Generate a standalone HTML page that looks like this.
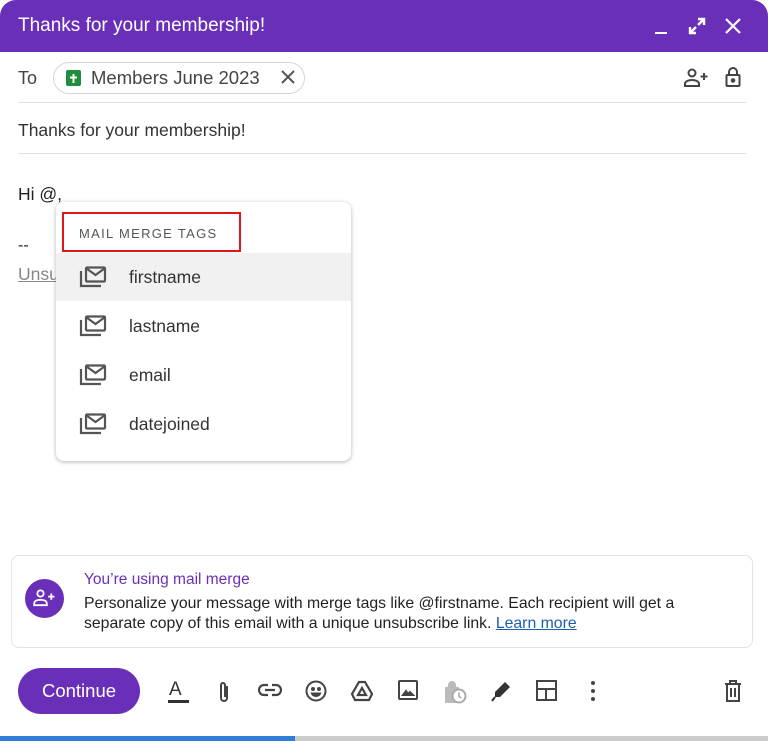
<!DOCTYPE html>
<html><head><meta charset="utf-8"><style>
*{margin:0;padding:0;box-sizing:border-box}
body{width:768px;height:741px;background:#fff;font-family:"Liberation Sans",sans-serif;position:relative;overflow:hidden;color:#222}
.abs{position:absolute}
.hdr{left:0;top:0;width:768px;height:52px;background:#6a2fb9;border-radius:16px 16px 0 0}
.t{white-space:nowrap}
.line{height:1px;background:#e3e3dc;left:18px;width:728px}
.pop{left:56px;top:202px;width:295px;height:259px;background:#fff;border-radius:8px;box-shadow:0 1px 4px rgba(0,0,0,.3)}
.item{left:56px;width:295px;height:48px}
.item svg{position:absolute;left:23px;top:13px}
.item span{position:absolute;left:73px;top:14px;font-size:17.5px;color:#333}
.tb{top:680px}
</style></head><body>
<div class="abs hdr"></div>
<div class="abs t" style="left:18px;top:15px;font-size:19px;color:#fff">Thanks for your membership!</div>
<div class="abs" style="left:655px;top:32px;width:12px;height:2px;background:#fff"></div>
<svg class="abs" style="left:688px;top:17px" width="18" height="18" viewBox="0 0 18 18" fill="none" stroke="#fff" stroke-width="2.4"><path d="M10 2h6v6M16 2l-6 6M8 16H2v-6M2 16l6-6"/></svg>
<svg class="abs" style="left:725px;top:18px" width="16" height="16" viewBox="0 0 16 16" stroke="#fff" stroke-width="2.2"><path d="M1 1l14 14M15 1L1 15"/></svg>

<div class="abs t" style="left:18px;top:68px;font-size:18px;color:#444">To</div>
<div class="abs" style="left:53px;top:62px;width:252px;height:32px;border:1px solid #d6d6d0;border-radius:16px"></div>
<svg class="abs" style="left:66px;top:70px" width="15" height="16" viewBox="0 0 15 16"><rect width="15" height="16" rx="2" fill="#1e8e3e"/><path d="M7.5 4v9M4 7.5h7" stroke="#fff" stroke-width="2"/></svg>
<div class="abs t" style="left:91px;top:67px;font-size:18.5px;color:#444">Members June 2023</div>
<svg class="abs" style="left:281px;top:70px" width="14" height="14" stroke="#555" stroke-width="2"><path d="M1 1l12 12M13 1L1 13"/></svg>
<svg class="abs" style="left:684px;top:68px" width="26" height="20" viewBox="0 0 26 20" fill="none" stroke="#444" stroke-width="2"><circle cx="8" cy="5" r="3.5"/><path d="M1 18v-2c0-3 4-4 7-4s7 1 7 4v2z"/><path d="M20 5v7M16.5 8.5h7"/></svg>
<svg class="abs" style="left:725px;top:66px" width="16" height="22" viewBox="0 0 16 22" fill="none" stroke="#444" stroke-width="2"><path d="M4 9V6a4 4 0 018 0v3"/><rect x="1.5" y="9" width="13" height="11" rx="1"/><circle cx="8" cy="14.5" r="1.3" fill="#444"/></svg>
<div class="abs line" style="top:102px"></div>
<div class="abs t" style="left:18px;top:120px;font-size:17.5px;color:#333">Thanks for your membership!</div>
<div class="abs line" style="top:153px"></div>
<div class="abs t" style="left:18px;top:184px;font-size:17.5px;color:#222">Hi @,</div>
<div class="abs t" style="left:18px;top:237px;font-size:16px;color:#222">--</div>
<div class="abs t" style="left:18px;top:264px;font-size:17.5px;color:#888;text-decoration:underline">Unsu</div>

<div class="abs pop"></div>
<div class="abs" style="left:62px;top:212px;width:179px;height:40px;border:2px solid #e0161b"></div>
<div class="abs t" style="left:79px;top:226px;font-size:13px;letter-spacing:1.3px;color:#555">MAIL MERGE TAGS</div>
<div class="abs item" style="top:253px;background:#f1f1f1"><svg width="28" height="22" viewBox="0 0 28 22" fill="none" stroke="#555" stroke-width="2.2"><path d="M2 5v15h20"/><rect x="7" y="1.5" width="19" height="14" rx="1"/><path d="M7.5 2.5l9 6.5 9-6.5"/></svg><span>firstname</span></div>
<div class="abs item" style="top:302px"><svg width="28" height="22" viewBox="0 0 28 22" fill="none" stroke="#555" stroke-width="2.2"><path d="M2 5v15h20"/><rect x="7" y="1.5" width="19" height="14" rx="1"/><path d="M7.5 2.5l9 6.5 9-6.5"/></svg><span>lastname</span></div>
<div class="abs item" style="top:351px"><svg width="28" height="22" viewBox="0 0 28 22" fill="none" stroke="#555" stroke-width="2.2"><path d="M2 5v15h20"/><rect x="7" y="1.5" width="19" height="14" rx="1"/><path d="M7.5 2.5l9 6.5 9-6.5"/></svg><span>email</span></div>
<div class="abs item" style="top:400px"><svg width="28" height="22" viewBox="0 0 28 22" fill="none" stroke="#555" stroke-width="2.2"><path d="M2 5v15h20"/><rect x="7" y="1.5" width="19" height="14" rx="1"/><path d="M7.5 2.5l9 6.5 9-6.5"/></svg><span>datejoined</span></div>

<div class="abs" style="left:11px;top:555px;width:742px;height:93px;border:1px solid #e3e3e3;border-radius:8px"></div>
<div class="abs" style="left:25px;top:579px;width:39px;height:39px;border-radius:50%;background:#6a2fb9"></div>
<svg class="abs" style="left:33px;top:589px" width="24" height="18" viewBox="0 0 26 20" fill="none" stroke="#fff" stroke-width="2"><circle cx="8" cy="5" r="3.5"/><path d="M1 18v-2c0-3 4-4 7-4s7 1 7 4v2z"/><path d="M20 5v7M16.5 8.5h7"/></svg>
<div class="abs t" style="left:84px;top:571px;font-size:15.5px;color:#6a2fb9">You’re using mail merge</div>
<div class="abs t" style="left:84px;top:594px;font-size:15.8px;color:#222;line-height:20px">Personalize your message with merge tags like @firstname. Each recipient will get a<br>separate copy of this email with a unique unsubscribe link. <span style="color:#1a5fb4;text-decoration:underline">Learn more</span></div>

<div class="abs" style="left:18px;top:668px;width:122px;height:46px;border-radius:23px;background:#6a2fb9;color:#fff;font-size:18.5px;text-align:center;line-height:46px">Continue</div>
<div class="abs t" style="left:169px;top:679px;font-size:19px;color:#333">A</div>
<div class="abs" style="left:168px;top:700px;width:21px;height:3px;background:#333"></div>
<svg class="abs tb" style="left:217px" width="14" height="24" viewBox="0 0 14 24" fill="none" stroke="#444" stroke-width="2"><path d="M10 6v12a3 3 0 01-6 0V5a2 2 0 014 0v12"/></svg>
<svg class="abs tb" style="left:258px;top:683px" width="24" height="14" viewBox="0 0 24 14" fill="none" stroke="#444" stroke-width="2.2"><path d="M10 2H6a5 5 0 000 10h4M14 2h4a5 5 0 010 10h-4M7 7h10"/></svg>
<svg class="abs tb" style="left:305px" width="22" height="22" viewBox="0 0 22 22" fill="none" stroke="#444" stroke-width="2"><circle cx="11" cy="11" r="9.5"/><circle cx="8" cy="9" r="1" fill="#444"/><circle cx="14" cy="9" r="1" fill="#444"/><path d="M7 13.5a4.5 4.5 0 008 0z" fill="#444"/></svg>
<svg class="abs tb" style="left:351px" width="22" height="22" viewBox="0 0 22 22" fill="none" stroke="#444" stroke-width="2.2"><path d="M8 2h6l7 12-3 6H4l-3-6z M11 8l-4 7h8z"/></svg>
<svg class="abs tb" style="left:398px" width="20" height="20" viewBox="0 0 20 20" fill="none" stroke="#444" stroke-width="2"><rect x="1" y="1" width="18" height="18" rx="1"/><path d="M5 15l3-4 2 3 2-2 3 3z" fill="#444"/></svg>
<svg class="abs tb" style="left:443px" width="24" height="24" viewBox="0 0 24 24"><path d="M3 8h12v14H3z M6 8V5a3 3 0 016 0v3" fill="#bbb" stroke="#bbb" stroke-width="2"/><circle cx="16" cy="16" r="6.5" fill="#fff" stroke="#aaa" stroke-width="2"/><path d="M16 12.5v4l2.5 1.5" stroke="#aaa" stroke-width="1.6" fill="none"/></svg>
<svg class="abs tb" style="left:490px" width="22" height="22" viewBox="0 0 22 22"><path d="M15 2l5 5-10 10-5 0 0-5z" fill="#333"/><path d="M5 17l-3 4" stroke="#333" stroke-width="2"/></svg>
<svg class="abs tb" style="left:536px" width="21" height="21" viewBox="0 0 21 21" fill="none" stroke="#444" stroke-width="2"><rect x="1" y="1" width="19" height="19"/><path d="M1 9h19M10 9v11"/></svg>
<svg class="abs tb" style="left:590px" width="6" height="22" viewBox="0 0 6 22" fill="#444"><circle cx="3" cy="3" r="2"/><circle cx="3" cy="11" r="2"/><circle cx="3" cy="19" r="2"/></svg>
<svg class="abs tb" style="left:724px" width="18" height="22" viewBox="0 0 18 22" fill="none" stroke="#444" stroke-width="2"><path d="M1 4h16M6 4V1h6v3M3 4v17h12V4M7 8v9M11 8v9"/></svg>

<div class="abs" style="left:0;top:736px;width:768px;height:5px;background:#ccc"></div>
<div class="abs" style="left:0;top:736px;width:295px;height:5px;background:#2f7fd8"></div>
</body></html>
